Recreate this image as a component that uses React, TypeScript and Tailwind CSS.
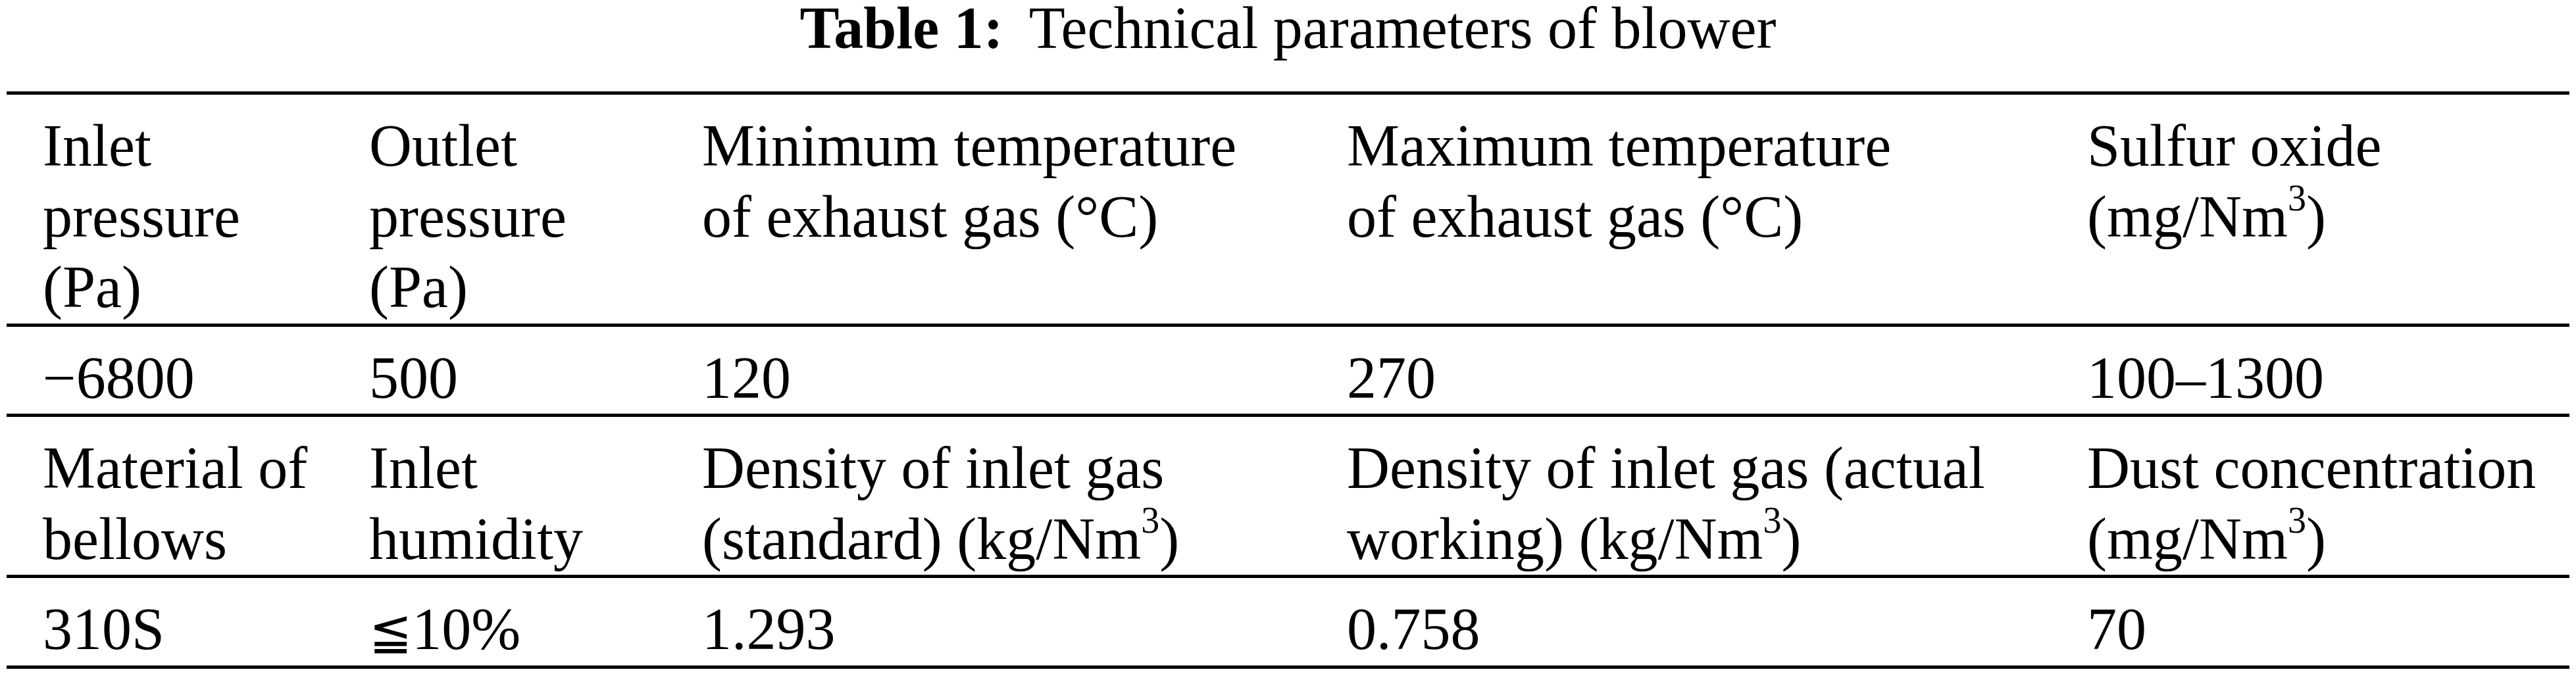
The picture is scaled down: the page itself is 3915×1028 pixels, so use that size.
import React from "react";

const Sup = () => <sup className="text-[56px] top-[-40px]">3</sup>;

type Cell = React.ReactNode;

const rows: Cell[][] = [
  [
    <>Inlet<br />pressure<br />(Pa)</>,
    <>Outlet<br />pressure<br />(Pa)</>,
    <>Minimum temperature<br />of exhaust gas (°C)</>,
    <>Maximum temperature<br />of exhaust gas (°C)</>,
    <>Sulfur oxide<br />(mg/Nm<Sup />)</>,
  ],
  ["−6800", "500", "120", "270", "100–1300"],
  [
    <>Material of<br />bellows</>,
    <>Inlet<br />humidity</>,
    <>Density of inlet gas<br />(standard) (kg/Nm<Sup />)</>,
    <>Density of inlet gas (actual<br />working) (kg/Nm<Sup />)</>,
    <>Dust concentration<br />(mg/Nm<Sup />)</>,
  ],
  [
    "310S",
    <><span className="font-['DejaVu_Sans',sans-serif] text-[78px] leading-none">≦</span>10%</>,
    "1.293",
    "0.758",
    "70",
  ],
];

export default function App() {
  return (
    <div className="w-[3915px] h-[1028px] bg-white text-black font-['Liberation_Serif',serif] overflow-hidden">
      <div className="pt-[2px] text-center text-[90px] leading-[100px] whitespace-nowrap -mt-[9px]">
        <span className="font-bold">Table 1:</span>
        <span className="ml-[39px]">Technical parameters of blower</span>
      </div>
      <div className="mx-[10px] mt-[46px] border-t-[5px] border-black">
        {rows.map((row, i) => (
          <div
            key={i}
            className="grid grid-cols-[496px_506px_980px_1125px_788px] border-b-[5px] border-black"
          >
            {row.map((cell, j) => (
              <div
                key={j}
                className="pl-[55px] pt-[24px] pb-[1px] text-[90px] leading-[107.5px] whitespace-nowrap"
              >
                {cell}
              </div>
            ))}
          </div>
        ))}
      </div>
    </div>
  );
}
